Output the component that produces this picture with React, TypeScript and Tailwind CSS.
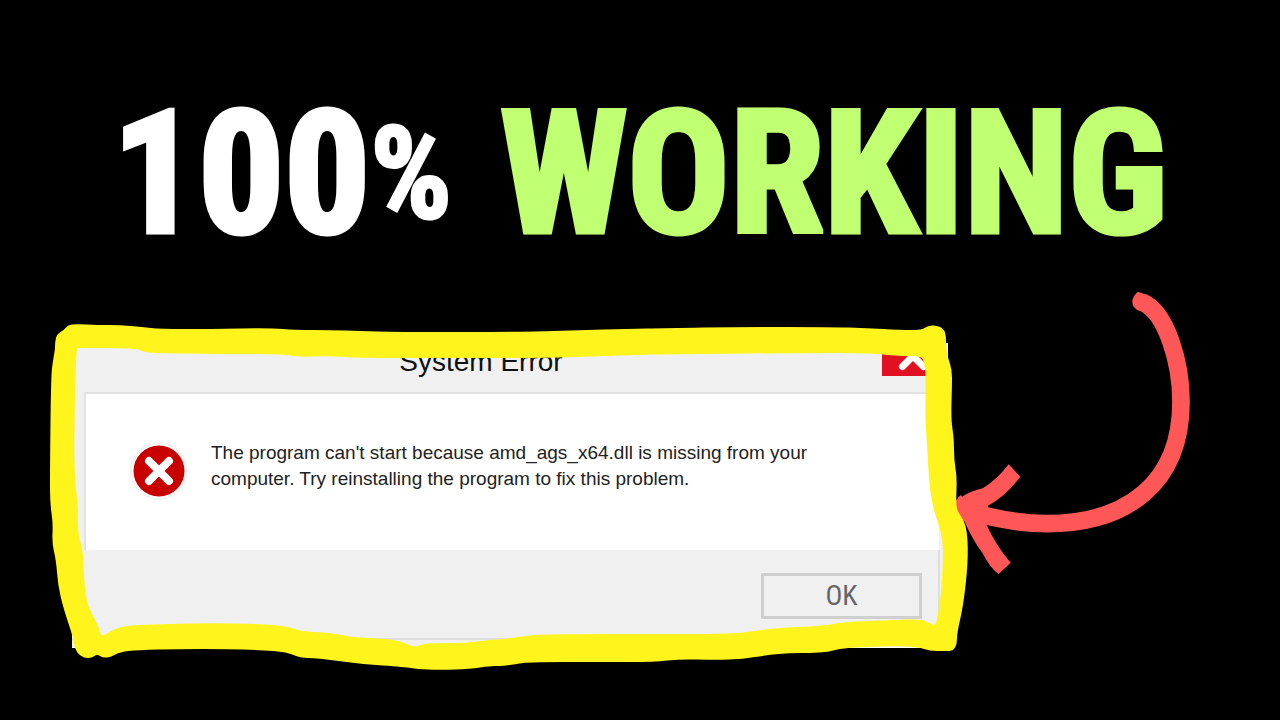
import { X } from "lucide-react";

type Point = [number, number];

const outerEdge: Point[] = [
  [55, 342], [57, 334], [64, 330], [68, 325], [76, 324], [98, 325], [120, 325], [142, 327], [160, 329],
  [210, 329], [270, 328], [295, 330], [330, 330], [360, 331], [395, 332], [527, 332], [580, 330], [627, 329],
  [667, 328], [740, 327], [830, 327], [867, 328], [900, 330], [922, 330], [927, 326], [936, 325], [944, 329],
  [946, 336], [946, 347], [948, 358], [952, 370], [952, 385], [951, 420], [954, 438], [954, 460], [957, 477],
  [956, 500], [957, 511], [964, 520], [967, 532], [968, 550], [967, 573], [963, 607], [957, 633], [957, 644],
  [953, 651], [944, 651], [930, 651], [918, 647], [893, 646], [870, 647], [843, 648], [828, 652], [810, 653],
  [790, 653], [767, 655], [743, 659], [715, 660], [680, 659], [655, 662], [600, 662], [527, 662], [512, 665],
  [500, 666], [490, 666], [470, 669], [440, 670], [417, 669], [405, 667], [360, 664], [317, 658], [300, 658],
  [287, 652], [260, 650], [227, 649], [180, 649], [137, 650], [120, 652], [111, 657], [103, 658], [97, 654],
  [92, 658], [84, 658], [77, 653], [74, 645], [73, 637], [63, 607], [58, 585], [56, 560], [52, 543],
  [53, 523], [50, 503], [50, 467], [51, 377], [53, 360], [55, 350],
];

const innerEdge: Point[] = [
  [77, 348], [79, 348], [135, 348], [144, 352], [155, 353], [220, 354], [283, 354], [297, 357], [330, 356],
  [360, 358], [440, 358], [530, 358], [580, 357], [627, 355], [680, 354], [813, 353], [867, 353], [900, 356],
  [920, 356], [924, 360], [926, 377], [925, 417], [927, 443], [928, 465], [930, 490], [933, 507], [938, 523],
  [943, 540], [943, 560], [942, 580], [940, 603], [937, 620], [935, 626], [928, 622], [920, 619], [893, 620],
  [843, 622], [823, 626], [773, 628], [743, 633], [710, 634], [667, 634], [547, 634], [523, 636], [507, 639],
  [487, 640], [467, 643], [430, 643], [423, 644], [416, 647], [409, 645], [397, 640], [373, 638], [350, 637],
  [327, 632], [303, 632], [287, 626], [260, 624], [207, 623], [133, 625], [120, 627], [109, 632], [101, 637],
  [99, 627], [87, 605], [84, 580], [83, 550], [78, 535], [78, 507], [76, 490], [74, 460], [75, 393],
  [76, 360],
];

// Closed curve that bends at every point and passes through the middles between them
function smooth(points: Point[]) {
  const parts = points.map(([x, y], i) => {
    const [nx, ny] = points[(i + 1) % points.length];
    return `Q${x} ${y} ${(x + nx) / 2} ${(y + ny) / 2}`;
  });
  const [fx, fy] = points[0];
  const [lx, ly] = points[points.length - 1];
  return `M${(fx + lx) / 2} ${(fy + ly) / 2}${parts.join("")}Z`;
}

function Headline() {
  return (
    <h1 className="flex items-center justify-center gap-12 font-['Roboto_Condensed','Roboto',sans-serif] text-[170px] leading-none font-bold">
      <span className="flex items-center text-white [-webkit-text-stroke:5px_#ffffff]">
        100
        <span className="text-[128px] [-webkit-text-stroke:3px_#ffffff]">%</span>
      </span>
      <span className="text-[#c1ff72] [-webkit-text-stroke:5px_#c1ff72]">
        WORKING
      </span>
    </h1>
  );
}

function ErrorIcon() {
  return (
    <svg className="size-[62px] shrink-0" viewBox="0 0 62 62" aria-hidden="true">
      <circle cx="31" cy="31" r="28" fill="#fff" stroke="#f3f3f3" strokeWidth="2" />
      <circle cx="31" cy="31" r="25.5" fill="#c80000" />
      <path
        d="M21 21 41 41M41 21 21 41"
        stroke="#fff"
        strokeWidth="8"
        strokeLinecap="round"
      />
    </svg>
  );
}

// Hand drawn marker line around the dialog
function Scribble() {
  return (
    <svg
      className="pointer-events-none absolute -top-[33px] -left-8 h-[370px] w-[940px]"
      viewBox="40 310 940 370"
      aria-hidden="true"
    >
      <path
        fill="#fff51d"
        fillRule="evenodd"
        d={smooth(outerEdge) + smooth(innerEdge)}
      />
    </svg>
  );
}

function Arrow() {
  return (
    <svg
      className="pointer-events-none h-[290px] w-[252px] shrink-0 overflow-visible"
      viewBox="24 30 756 870"
      aria-hidden="true"
    >
      <path
        fill="none"
        stroke="#ff5757"
        strokeWidth="53"
        d="M606 66C680 96 723 250 723 365C723 610 560 731 320 731C250 731 190 722 110 700"
      />
      <path
        fill="#ff5757"
        d="M593 35Q606 38 622 46L600 93Q575 86 577 60Q582 45 593 35ZM212 848L176 882Q150 865 128 820Q95 775 74 725Q60 705 38 685Q48 655 63 645L66 650Q100 630 128 625Q170 600 206 553L241 590Q195 650 144 677L138 731Q170 800 212 848Z"
      />
    </svg>
  );
}

function ErrorDialog() {
  return (
    <div
      role="alertdialog"
      aria-labelledby="dialog-title"
      aria-describedby="dialog-message"
      className="relative mt-[53px] w-[876px] shrink-0 border-r border-b border-white bg-[#f0f0f0] font-['Liberation_Sans',Arial,sans-serif]"
    >
      <div className="flex h-[49px] items-start pr-1 pl-2">
        <h2
          id="dialog-title"
          className="flex-1 text-center text-[28px] leading-[38px] text-[#111111]"
        >
          System Error
        </h2>
        <button
          type="button"
          aria-label="Close"
          className="flex h-[33px] w-[61px] items-center justify-center bg-[#e01123] pb-2 text-white"
        >
          <X className="shrink-0" size={42} strokeWidth={4} />
        </button>
      </div>

      <div className="mr-2 ml-3 flex h-[158px] items-start gap-[21px] border-t-2 border-l-2 border-[#e2e2e2] bg-white pt-[46px] pl-[42px]">
        <ErrorIcon />
        <p id="dialog-message" className="text-[19px] leading-[26px] text-[#222222]">
          The program can't start because amd_ags_x64.dll is missing from your
          <br />
          computer. Try reinstalling the program to fix this problem.
        </p>
      </div>

      <div className="mr-[7px] flex h-[90px] justify-end border-r-2 border-b-2 border-[#dedede] pt-[23px] pr-4">
        <button
          type="button"
          className="h-[46px] w-[161px] border-[3px] border-[#cfcfcf] font-['Roboto_Condensed','Roboto',sans-serif] text-[28px] leading-none text-[#666666]"
        >
          OK
        </button>
      </div>
      <div className="h-[7px]" />

      <Scribble />
    </div>
  );
}

export default function App() {
  return (
    <main className="min-h-screen overflow-hidden bg-black pt-[89px] pb-10">
      <Headline />
      <div className="mt-[31px] flex items-start justify-center pr-2">
        <ErrorDialog />
        <Arrow />
      </div>
    </main>
  );
}
